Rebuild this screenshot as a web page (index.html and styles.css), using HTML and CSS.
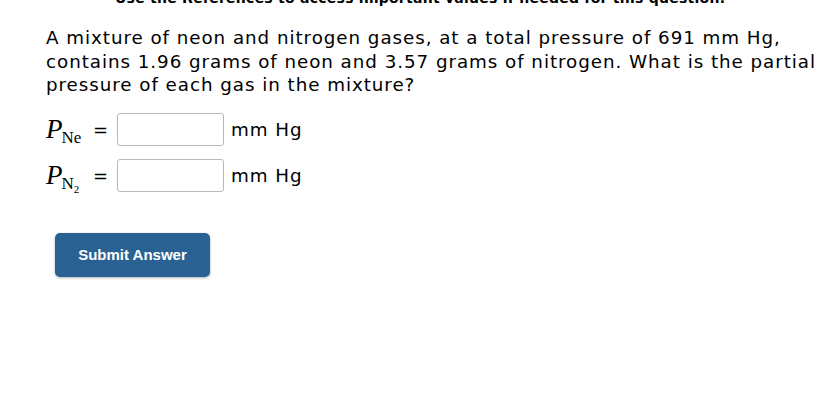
FILE: index.html
```html
<!DOCTYPE html>
<html>
<head>
<meta charset="utf-8">
<link rel="stylesheet" href="styles.css">
</head>
<body>
<div class="page">
  <div class="refs">Use the References to access important values if needed for this question.</div>
  <div class="question">
    <p class="prompt">A mixture of neon and nitrogen gases, at a total pressure of 691 mm Hg, contains 1.96 grams of neon and 3.57 grams of nitrogen. What is the partial pressure of each gas in the mixture?</p>
    <div class="rows">
      <div class="row">
        <span class="sym"><i class="p">P</i><span class="sub">Ne</span></span>
        <span class="eq">=</span>
        <input class="box" type="text">
        <span class="unit">mm Hg</span>
      </div>
      <div class="row">
        <span class="sym"><i class="p">P</i><span class="sub">N<span class="subsub">2</span></span></span>
        <span class="eq">=</span>
        <input class="box" type="text">
        <span class="unit">mm Hg</span>
      </div>
    </div>
    <button class="submit">Submit Answer</button>
  </div>
</div>
</body>
</html>
```

FILE: styles.css
```css
html, body {
  margin: 0;
  padding: 0;
  background: #ffffff;
}
.page {
  width: 838px;
  height: 406px;
  overflow: hidden;
  font-family: "DejaVu Sans", Verdana, sans-serif;
  color: #000;
}
.refs {
  font-weight: bold;
  font-size: 14px;
  line-height: 16px;
  margin-top: -10px;
  padding-left: 115px;
  letter-spacing: 0.25px;
  white-space: nowrap;
}
.question {
  padding-left: 46px;
  padding-top: 20px;
}
.prompt {
  margin: 0;
  font-size: 18.3px;
  letter-spacing: 0.95px;
  line-height: 23.5px;
  width: 785px;
}
.rows {
  display: flex;
  flex-direction: column;
  gap: 13px;
  margin-top: 16px;
}
.row {
  display: flex;
  align-items: center;
  height: 33px;
}
.sym {
  font-family: "Liberation Serif", "Times New Roman", serif;
  width: 47px;
  display: inline-flex;
  align-items: baseline;
}
.p {
  font-size: 27px;
  margin-right: 1px;
}
.sub {
  font-size: 17px;
  position: relative;
  top: 5px;
  margin-left: -2px;
}
.subsub {
  font-size: 11px;
  position: relative;
  top: 4px;
}
.eq {
  font-size: 18px;
  width: 24px;
}
.box {
  box-sizing: border-box;
  width: 107px;
  height: 33px;
  border: 1px solid #b8b8b8;
  border-radius: 3px;
  margin: 0 7px 0 0;
  padding: 0;
}
.unit {
  font-size: 18.3px;
  letter-spacing: 0.95px;
}
.submit {
  margin-top: 41px;
  margin-left: 9px;
  width: 155px;
  height: 44px;
  background: #296292;
  color: #fff;
  border: none;
  border-radius: 5px;
  font-family: "Liberation Sans", Arial, sans-serif;
  font-size: 15px;
  font-weight: bold;
  box-shadow: 0 1px 3px rgba(0,0,0,0.3);
  padding: 0;
}
```
